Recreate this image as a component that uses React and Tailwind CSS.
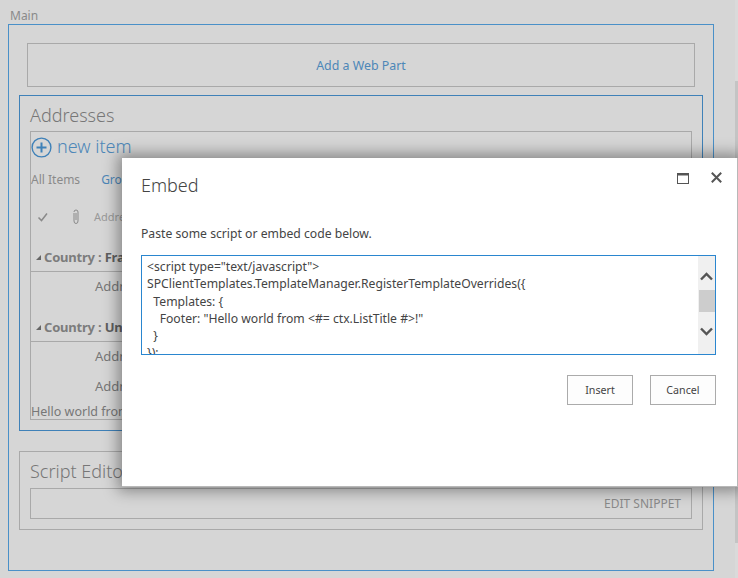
const sans = { fontFamily: '"Noto Sans", sans-serif' };

function GroupHeader({ label, value }) {
  return (
    <div className="flex items-start h-[25px] pl-[3px] pt-[1px] border-b border-[#a9a9a9] text-[13px] leading-[18px] font-bold text-[#7c7c7c]">
      <svg width="9" height="9" viewBox="0 0 9 9" className="mr-[1px] mt-[5px]"><path d="M7 2 L7 7 L2 7 Z" fill="#666" /></svg>
      <span className="whitespace-nowrap tracking-[-0.2px]">{label} : <span className="text-[#5f5f5f]">{value}</span></span>
    </div>
  );
}

function Row() {
  return <div className="h-[30px] pl-[64px] pt-[5px] text-[13px] leading-[18px] text-[#777]">Addr</div>;
}

function Dialog() {
  return (
    <div className="absolute left-[122px] top-[158px] w-[616px] h-[329px] bg-white border-r border-b border-[#b8b8b8] shadow-[0_0_14px_4px_rgba(0,0,0,0.38)] text-[#444]">
      <div className="flex items-start justify-between pl-[19px] pr-[15px] pt-[13px]">
        <h1 className="text-[18px] leading-[28px] font-light text-[#444]">Embed</h1>
        <div className="flex items-start gap-[22px] pt-[1px]">
          <svg width="12" height="11" viewBox="0 0 12 11" fill="none" stroke="#555" className="mt-[1px]">
            <rect x="0.5" y="0.5" width="11" height="10" />
            <path d="M0 1.5 H12" strokeWidth="2" />
          </svg>
          <svg width="11" height="11" viewBox="0 0 11 11" fill="none" stroke="#555" strokeWidth="2">
            <path d="M0.8 0.8 L10.2 10.2 M10.2 0.8 L0.8 10.2" />
          </svg>
        </div>
      </div>
      <p className="pl-[19px] mt-[26px] text-[12.2px] leading-[18px] text-[#444] whitespace-nowrap">Paste some script or embed code below.</p>
      <div className="relative ml-[19px] mt-[12px] w-[575px] h-[100px] border border-[#2a86cf] overflow-hidden">
        <pre className="pl-[5px] pt-[2px] text-[12.2px] leading-[17.3px] text-[#444] whitespace-pre" style={sans}>{`<script type="text/javascript">
SPClientTemplates.TemplateManager.RegisterTemplateOverrides({
  Templates: {
    Footer: "Hello world from <#= ctx.ListTitle #>!"
  }
});`}</pre>
        <div className="absolute right-0 top-0 bottom-0 w-[17px] bg-[#f0f0f0] flex flex-col">
          <div className="h-[17px] mt-[12px] flex items-center justify-center">
            <svg width="13" height="9" viewBox="0 0 13 9" fill="none" stroke="#555" strokeWidth="2.4"><path d="M1 7.5 L6.5 2 L12 7.5" /></svg>
          </div>
          <div className="h-[22px] mt-[5px] ml-[1px] bg-[#cdcdcd]" />
          <div className="flex-1" />
          <div className="h-[17px] mb-[14px] flex items-center justify-center">
            <svg width="13" height="9" viewBox="0 0 13 9" fill="none" stroke="#555" strokeWidth="2.4"><path d="M1 1.5 L6.5 7 L12 1.5" /></svg>
          </div>
        </div>
      </div>
      <div className="flex justify-end gap-[17px] mt-[20px] mr-[21px]">
        <button className="w-[66px] h-[30px] bg-[#fdfdfd] border border-[#ababab] text-[10.7px] text-[#444]">Insert</button>
        <button className="w-[66px] h-[30px] bg-[#fdfdfd] border border-[#ababab] text-[10.7px] text-[#444]">Cancel</button>
      </div>
    </div>
  );
}

export default function App() {
  return (
    <div className="relative w-[738px] h-[578px] overflow-hidden bg-[#d6d6d6]" style={sans}>
      <div className="absolute right-0 top-0 bottom-0 w-[3px] bg-[#dadada]">
        <div className="mt-[81px] h-[462px] bg-[#c4c4c4]" />
      </div>

      <div className="pl-[8px] pt-[8px] w-[714px]">
        <div className="text-[12px] leading-[16px] text-[#8a8a8a] pl-[2px]">Main</div>
        <div className="h-[547px] border border-[#4a90c8] pt-[18px] pl-[10px] pr-[10px]">
          <div className="ml-[8px] mr-[8px] h-[44px] pt-[2px] border border-[#a9a9a9] flex items-center justify-center text-[12.4px] text-[#4d87b8]">Add a Web Part</div>

          <div className="mt-[8px] h-[336px] border border-[#3f81b8] px-[10px] pt-[7px]">
            <h2 className="text-[18px] leading-[25px] font-light text-[#777]">Addresses</h2>
            <div className="mt-[3px] h-[289px] border border-[#a9a9a9]">
              <div className="flex items-center h-[30px] text-[18px] text-[#4d87b8] font-light">
                <svg width="21" height="21" viewBox="0 0 21 21" fill="none" stroke="#3f81b8" className="mr-[5px]">
                  <circle cx="10.5" cy="10.5" r="9.4" strokeWidth="1.4" />
                  <path d="M10.5 5.5 V15.5 M5.5 10.5 H15.5" strokeWidth="2" />
                </svg>
                <span className="pb-[2px]">new item</span>
              </div>
              <div className="mt-[9px] flex text-[12px] leading-[18px]">
                <span className="text-[#8a8a8a]">All Items</span>
                <span className="ml-[21px] text-[#4d87b8]">Group</span>
              </div>
              <div className="mt-[16px] flex items-center h-[24px] pl-[6px] text-[11px] text-[#999]">
                <svg width="12" height="12" viewBox="0 0 12 12" fill="none" stroke="#8a8a8a" strokeWidth="1.5"><path d="M1.5 6.5 L4.5 9.5 L10 2.5" /></svg>
                <svg width="10" height="16" viewBox="0 0 10 16" fill="none" stroke="#8a8a8a" className="ml-[22px]"><path d="M3 4 V12 Q3 14.5 5 14.5 Q7 14.5 7 12 V3 Q7 1 5 1 Q3 1 3 3 M5 4 V11" /></svg>
                <span className="ml-[13px]">Address</span>
              </div>
              <div className="mt-[18px]"><GroupHeader label="Country" value="France" /></div>
              <Row />
              <div className="mt-[15px]"><GroupHeader label="Country" value="United" /></div>
              <Row />
              <Row />
              <div className="pt-[1px] text-[12.5px] leading-[17px] text-[#777] whitespace-nowrap">Hello world from</div>
            </div>
          </div>

          <div className="mt-[20px] h-[79px] border border-[#a9a9a9] px-[10px] pt-[7px]">
            <h2 className="text-[18px] leading-[25px] font-light text-[#777]">Script Editor</h2>
            <div className="mt-[4px] h-[31px] pt-[1px] border border-[#a9a9a9] flex items-center justify-end pr-[10px] text-[12px] text-[#8a8a8a]">EDIT SNIPPET</div>
          </div>
        </div>
      </div>

      <Dialog />
    </div>
  );
}
